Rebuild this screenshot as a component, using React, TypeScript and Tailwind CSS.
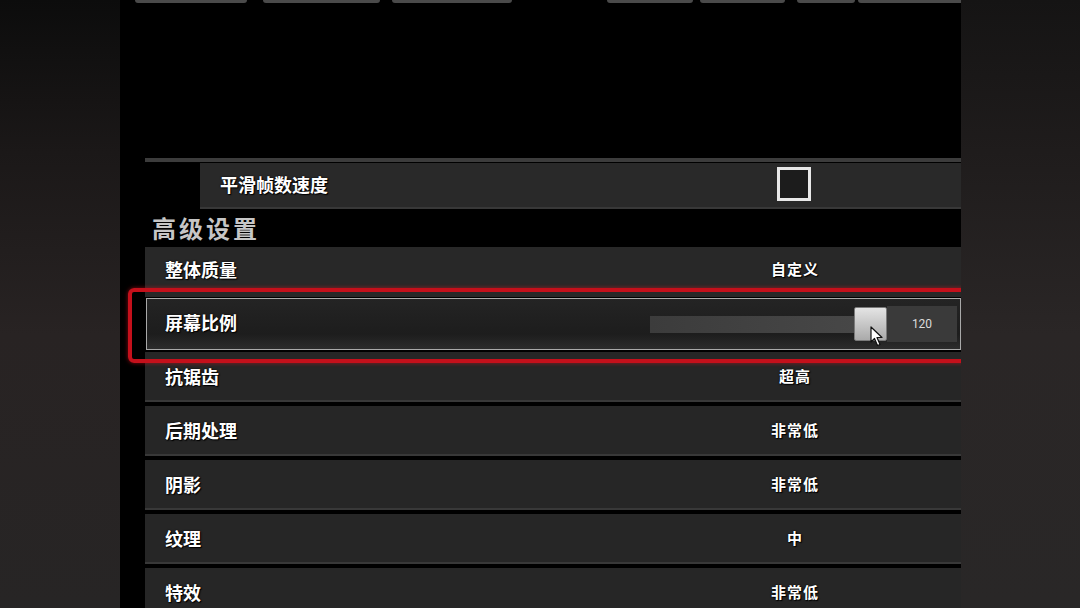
const topBars = [
  { left: 15, width: 112 },
  { left: 143, width: 117 },
  { left: 272, width: 120 },
  { left: 487, width: 86 },
  { left: 580, width: 85 },
  { left: 677, width: 58 },
  { left: 738, width: 110 },
]

const rows = [
  { label: '抗锯齿', value: '超高' },
  { label: '后期处理', value: '非常低' },
  { label: '阴影', value: '非常低' },
  { label: '纹理', value: '中' },
  { label: '特效', value: '非常低' },
]

const shadow = '[text-shadow:1px_1px_1px_#000,0_0_2px_#000]'

function SettingRow({ label, value, first }: { label: string; value: string; first?: boolean }) {
  return (
    <div
      className={`grid h-[50px] grid-cols-[580px_100px] items-center border-b-2 border-[#383838] bg-[#262626] pl-5 ${
        first ? 'mt-[2px]' : 'mt-[4px]'
      }`}
    >
      <span className={`text-[18px] font-bold text-white ${shadow}`}>{label}</span>
      <span className={`text-center text-[15px] font-bold tracking-[1px] text-white ${shadow}`}>{value}</span>
    </div>
  )
}

function Cursor() {
  return (
    <svg className="absolute left-[15px] top-[18px]" width="14" height="21" viewBox="0 0 14 21">
      <path
        d="M1 1 L1 16 L4.5 12.5 L7.5 19.5 L10 18.5 L7 11.5 L12 11.5 Z"
        fill="#fff"
        stroke="#111"
        strokeWidth="1.2"
        strokeLinejoin="round"
      />
    </svg>
  )
}

export default function App() {
  return (
    <div className="flex h-[608px] w-[1080px] overflow-hidden bg-black font-['Noto_Sans_CJK_SC',sans-serif]">
      <aside className="w-[120px] shrink-0 bg-[linear-gradient(180deg,#0c0c0c_0%,#1b1818_25%,#282323_55%,#272525_100%)]" />

      <main className="relative w-[841px] shrink-0 overflow-hidden bg-black">
        <div className="relative h-[3px]">
          {topBars.map((b, i) => (
            <div
              key={i}
              className="absolute top-0 h-[3px] rounded-b-sm bg-[#4a4a4a]"
              style={{ left: b.left, width: b.width }}
            />
          ))}
        </div>

        <div className="mt-[155px] pl-[25px]">
          <div className="h-[4px] bg-[#3c3c3c]" />

          <div className="ml-[55px] mt-[1px] grid h-[46px] grid-cols-[557px_34px] items-center border-b-2 border-[#383838] bg-[#292929] pb-[2px] pl-5">
            <span className={`text-[18px] font-bold text-white ${shadow}`}>平滑帧数速度</span>
            <div className="h-[34px] w-[34px] border-[3px] border-[#e8e8e8] bg-[#1c1c1c]" />
          </div>

          <div className="flex h-[38px] items-center pl-[7px]">
            <h2 className={`text-[24px] font-bold tracking-[3px] text-[#c6c6c6] ${shadow}`}>高级设置</h2>
          </div>

          <div className="grid h-[50px] grid-cols-[580px_100px] items-center bg-[#282828] pb-[5px] pl-5">
            <span className={`text-[18px] font-bold text-white ${shadow}`}>整体质量</span>
            <span className={`text-center text-[15px] font-bold tracking-[1px] text-white ${shadow}`}>自定义</span>
          </div>

          <div className="relative ml-[1px] mt-[1px]">
            <div className="flex h-[52px] items-center border border-[#a9a9a9] bg-[linear-gradient(180deg,#242424_0%,#1d1d1d_70%,#2c2c2c_100%)] pb-[3px] pl-[18px] pr-[3px]">
              <span className={`flex-1 text-[18px] font-bold text-white ${shadow}`}>屏幕比例</span>
              <div className="mt-[3px] h-[17px] w-[207px] bg-[linear-gradient(90deg,#3c3c3c,#474747)]" />
              <div className="relative -ml-[3px] mt-[3px] h-[34px] w-[33px] rounded-[2px] border border-[#7a7a7a] bg-[linear-gradient(180deg,#e4e4e4,#aaaaaa)]">
                <Cursor />
              </div>
              <div className="mt-[3px] flex h-[36px] w-[70px] items-center justify-center bg-[#3a3a3a] font-['Roboto',sans-serif] text-[12px] text-[#dcdcdc]">
                120
              </div>
            </div>
            <div className="pointer-events-none absolute -bottom-[13px] -left-[18px] -right-[40px] -top-[10px] z-10 rounded-[6px] border-[4px] border-[#c4101b] shadow-[0_0_4px_rgba(220,20,30,0.6)]" />
          </div>

          {rows.map((r, i) => (
            <SettingRow key={r.label} label={r.label} value={r.value} first={i === 0} />
          ))}
        </div>
      </main>

      <aside className="flex-1 bg-[linear-gradient(180deg,#151414_0%,#1f1c1c_25%,#2a2626_55%,#292727_100%)]" />
    </div>
  )
}
